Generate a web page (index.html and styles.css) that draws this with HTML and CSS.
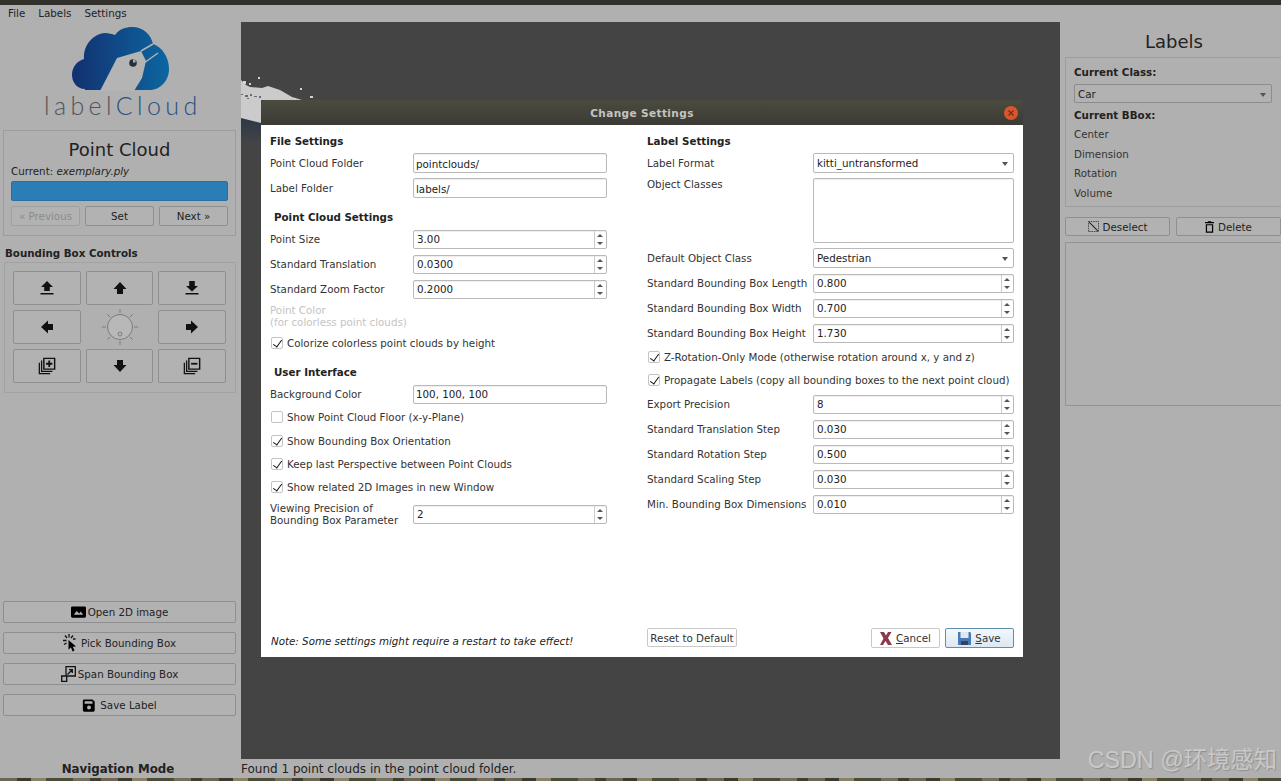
FILE: index.html
```html
<!DOCTYPE HTML>
<html>
<head>
 <title>labelCloud</title>
 <meta name="viewport" content="width=device-width, initial-scale=1">
 <link rel="stylesheet" href="styles.css">
</head>

<body>
<svg class="icon-defs" width="0" height="0">
  <symbol id="i-up" viewBox="0 0 16 16"><path d="M8 2 14.500 9H11v5H5V9H1.500z"/></symbol>
  <symbol id="i-up-bar" viewBox="0 0 16 16"><path d="M8 1 14 7H10.800v4H5.200V7H2zM1.500 13h13v1.600h-13z"/></symbol>
  <symbol id="i-down-bar" viewBox="0 0 16 16"><path d="M5.200 1h5.600v5H14L8 11.500 2 6h3.200zM1.500 13h13v1.600h-13z"/></symbol>
  <symbol id="i-add" viewBox="0 0 20 20"><path d="M6.500 1.500h12v12h-12z" fill="none" stroke="#111" stroke-width="1.600"/><path d="M11.500 4h2v2.500H16v2h-2.500V11h-2V8.500H9v-2h2.500z"/><path d="M4 4v12h12M1.500 6.500v12h12" fill="none" stroke="#111" stroke-width="1.400"/></symbol>
  <symbol id="i-remove" viewBox="0 0 20 20"><path d="M6.500 1.500h12v12h-12z" fill="none" stroke="#111" stroke-width="1.600"/><path d="M9 6.500h7v2H9z"/><path d="M4 4v12h12M1.500 6.500v12h12" fill="none" stroke="#111" stroke-width="1.400"/></symbol>
  <symbol id="i-floppy" viewBox="0 0 16 16"><path d="M2.500 1h9.500l2.500 2.500v10a1.500 1.500 0 0 1-1.500 1.500H2.500A1.500 1.500 0 0 1 1 13.500v-11A1.500 1.500 0 0 1 2.500 1zM3 3v3h9V3zm5 5a2 2 0 1 0 0 4.500A2 2 0 0 0 8 8z" fill-rule="evenodd"/></symbol>
</svg>

<div class="top-strip"></div>
<div class="menubar">
  <span>File</span>
  <span>Labels</span>
  <span>Settings</span>
</div>

<div class="main">
  <div class="left-panel">
    <div class="logo">
      <svg class="logo-mark" width="120" height="75" viewBox="0 0 120 75">
        <defs>
          <linearGradient id="cloud-grad" x1="0" x2="1" y1="0" y2="0">
            <stop offset="0" stop-color="#12306f"/>
            <stop offset="1" stop-color="#0d66a1"/>
          </linearGradient>
        </defs>
        <path fill="url(#cloud-grad)" d="M25 69C17 69 12 62 12 55 12 47 17 41 24 39 23 25 33 14 45 13 49 13 52 14 55 15 59 9 66 7 72 7 84 7 91 15 93 24 102 27 109 37 109 49 109 61 100 70 90 70H25z"/>
        <path fill="#b4b4b4" d="M40 71 57 38 81 31 86 41 82 58 74 71z"/>
        <path fill="none" stroke="#b4b4b4" stroke-width="1.500" d="M81 31 93 24M84 43 98 33"/>
        <circle cx="73" cy="43" r="3.800" fill="#2a2f36"/>
        <path fill="#b4b4b4" d="M73 39.500h2.500v3h-2.500z"/>
      </svg>
      <div class="logo-text">label<span class="logo-cloud">Cloud</span></div>
    </div>

    <div class="group">
      <div class="group-title">Point Cloud</div>
      <div class="current">Current: <i>exemplary.ply</i></div>
      <div class="progress"></div>
      <div class="pc-buttons">
        <div class="btn btn-disabled">« Previous</div>
        <div class="btn">Set</div>
        <div class="btn">Next »</div>
      </div>
    </div>

    <div class="controls-title">Bounding Box Controls</div>
    <div class="controls">
      <div class="btn"><svg class="ctl-icon"><use href="#i-up-bar"/></svg></div>
      <div class="btn"><svg class="ctl-icon"><use href="#i-up"/></svg></div>
      <div class="btn"><svg class="ctl-icon"><use href="#i-down-bar"/></svg></div>
      <div class="btn"><svg class="ctl-icon turn-left"><use href="#i-up"/></svg></div>
      <div class="dial">
        <svg width="36" height="36" viewBox="0 0 36 36">
          <path fill="none" stroke="#7c7c7c" d="M18 0v4M18 32v4M0 18h4M32 18h4M5.300 5.300l2.800 2.800M27.900 27.900l2.800 2.800M5.300 30.700l2.800-2.800M27.900 8.100l2.800-2.800"/>
          <circle cx="18" cy="18" r="12.500" fill="#b8b8b8" stroke="#7c7c7c"/>
          <circle cx="18" cy="25" r="2" fill="none" stroke="#7c7c7c"/>
        </svg>
      </div>
      <div class="btn"><svg class="ctl-icon turn-right"><use href="#i-up"/></svg></div>
      <div class="btn"><svg class="ctl-icon-lg"><use href="#i-add"/></svg></div>
      <div class="btn"><svg class="ctl-icon flip-y"><use href="#i-up"/></svg></div>
      <div class="btn"><svg class="ctl-icon-lg"><use href="#i-remove"/></svg></div>
    </div>

    <div class="actions">
      <div class="btn btn-wide btn-tight">
        <svg width="15" height="12" viewBox="0 0 16 12"><path fill-rule="evenodd" d="M1.500 0h13A1.500 1.500 0 0 1 16 1.500v9a1.500 1.500 0 0 1-1.500 1.500h-13A1.500 1.500 0 0 1 0 10.500v-9A1.500 1.500 0 0 1 1.500 0zM3 9h10L10.500 5.500 8.800 7.500 6 5z"/></svg>
        Open 2D image
      </div>
      <div class="btn btn-wide">
        <svg width="14" height="18" viewBox="0 0 14 18"><path d="M5.500 6 13 12.500 9.800 12.700 11.500 16.500 9.600 17.400 8 13.500 5.500 15.500z"/><path fill="none" stroke="#111" stroke-width="1.300" d="M6 0v3.500M2 1.500 4 4M10 1.500 8 4M0 6.500h3.500M1 10.500 3.500 9M12.500 5h-2.500"/></svg>
        Pick Bounding Box
      </div>
      <div class="btn btn-wide btn-tight">
        <svg width="15" height="16" viewBox="0 0 15 16"><path fill="none" stroke="#111" stroke-width="1.300" d="M5 5V.7h9.300V10H10M.7 10h5v5.300h-5zM6.500 8.500 11 4M8 3.700h3.300V7M5 5v5M5 10h5"/></svg>
        Span Bounding Box
      </div>
      <div class="btn btn-wide">
        <svg class="act-floppy"><use href="#i-floppy"/></svg>
        Save Label
      </div>
    </div>
  </div>

  <div class="gl-view">
    <svg class="cloud-points" width="80" height="100" viewBox="0 0 80 100">
      <defs>
        <linearGradient id="slate" x1="0" x2="0" y1="0" y2="1">
          <stop offset="0" stop-color="#2d3848"/>
          <stop offset="1" stop-color="#444"/>
        </linearGradient>
      </defs>
      <path fill="url(#slate)" d="M0 74 20 79V100H0z"/>
      <path fill="#cbcbcb" d="M0 36 5 41 9 43 21 44 27 42 39 46 51 53 61 56H20V79L0 74z"/>
      <path fill="#6a6a6a" d="M0 50h2v1H0zM4 51h3v2H4zM9 50h2v2H9zM13 52h3v1h-3zM18 52h2v2h-2zM6 54h2v1H6z"/>
      <path fill="#d2d2d2" d="M2 37h3v3H2zM8 39h2v2H8zM17 33h2v2h-2zM59 44h2v2h-2zM69 52h3v2h-3zM52 54h3v1h-3z"/>
    </svg>
  </div>

  <div class="right-panel">
    <div class="labels-title">Labels</div>
    <div class="label-group">
      <div class="bold">Current Class:</div>
      <div class="combo combo-dim">Car<span class="caret"></span></div>
      <div class="bold bbox-title">Current BBox:</div>
      <div class="bbox-row">Center</div>
      <div class="bbox-row">Dimension</div>
      <div class="bbox-row">Rotation</div>
      <div class="bbox-row">Volume</div>
    </div>
    <div class="label-buttons">
      <div class="btn">
        <svg width="11" height="11" viewBox="0 0 14 14"><path fill="none" stroke="#222" stroke-dasharray="2 1" d="M.5.500h13v13H.5z"/><path fill="none" stroke="#222" stroke-width="1.300" d="M1.500 1.500l11 11"/></svg>
        Deselect
      </div>
      <div class="btn">
        <svg width="9" height="12" viewBox="0 0 11 14"><path fill-rule="evenodd" d="M0 1h3.500V0h4v1H11v1.500H0zM1 3.500h9V14H1zM2.500 5v7.500h6V5z"/></svg>
        Delete
      </div>
    </div>
    <div class="label-list"></div>
  </div>
</div>

<div class="status">
  <div class="mode">Navigation Mode</div>
  <div class="status-text">Found 1 point clouds in the point cloud folder.</div>
</div>
<div class="photo-strip"></div>

<div class="dialog">
  <div class="dialog-title">
    <span>Change Settings</span>
    <span class="close-btn">
      <svg width="8" height="8" viewBox="0 0 8 8"><path fill="none" stroke="#7a2a12" stroke-width="1.200" d="M1.500 1.500l5 5M6.500 1.500l-5 5"/></svg>
    </span>
  </div>
  <div class="dialog-body">

    <div class="col col-left">
      <div class="heading">File Settings</div>
      <div class="row row-first"><label>Point Cloud Folder</label><div class="field">pointclouds/</div></div>
      <div class="row"><label>Label Folder</label><div class="field">labels/</div></div>

      <div class="heading heading-sub pc-heading">Point Cloud Settings</div>
      <div class="row row-spin row-after-head"><label>Point Size</label><div class="spin">3.00<span class="stepper"></span></div></div>
      <div class="row row-spin"><label>Standard Translation</label><div class="spin">0.0300<span class="stepper"></span></div></div>
      <div class="row row-spin"><label>Standard Zoom Factor</label><div class="spin">0.2000<span class="stepper"></span></div></div>
      <div class="two-line two-line-off">Point Color<br>(for colorless point clouds)</div>
      <div class="check"><span class="box on"></span>Colorize colorless point clouds by height</div>

      <div class="heading heading-sub ui-heading">User Interface</div>
      <div class="row row-spin row-after-head"><label>Background Color</label><div class="field field-thin">100, 100, 100</div></div>
      <div class="check check-tight"><span class="box"></span>Show Point Cloud Floor (x-y-Plane)</div>
      <div class="check check-8"><span class="box on"></span>Show Bounding Box Orientation</div>
      <div class="check"><span class="box on"></span>Keep last Perspective between Point Clouds</div>
      <div class="check"><span class="box on"></span>Show related 2D Images in new Window</div>
      <div class="row row-tall"><label>Viewing Precision of<br>Bounding Box Parameter</label><div class="spin">2<span class="stepper"></span></div></div>

      <div class="note"><i>Note: Some settings might require a restart to take effect!</i></div>
    </div>

    <div class="col col-right">
      <div class="heading">Label Settings</div>
      <div class="row row-first"><label>Label Format</label><div class="combo">kitti_untransformed<span class="caret"></span></div></div>
      <div class="row row-classes"><label>Object Classes</label><div class="textbox"></div></div>
      <div class="row"><label>Default Object Class</label><div class="combo">Pedestrian<span class="caret"></span></div></div>
      <div class="row row-spin"><label>Standard Bounding Box Length</label><div class="spin">0.800<span class="stepper"></span></div></div>
      <div class="row row-spin"><label>Standard Bounding Box Width</label><div class="spin">0.700<span class="stepper"></span></div></div>
      <div class="row row-spin"><label>Standard Bounding Box Height</label><div class="spin">1.730<span class="stepper"></span></div></div>
      <div class="check check-6"><span class="box on"></span>Z-Rotation-Only Mode (otherwise rotation around x, y and z)</div>
      <div class="check"><span class="box on"></span>Propagate Labels (copy all bounding boxes to the next point cloud)</div>
      <div class="row row-spin row-7"><label>Export Precision</label><div class="spin">8<span class="stepper"></span></div></div>
      <div class="row row-spin"><label>Standard Translation Step</label><div class="spin">0.030<span class="stepper"></span></div></div>
      <div class="row row-spin"><label>Standard Rotation Step</label><div class="spin">0.500<span class="stepper"></span></div></div>
      <div class="row row-spin"><label>Standard Scaling Step</label><div class="spin">0.030<span class="stepper"></span></div></div>
      <div class="row row-spin"><label>Min. Bounding Box Dimensions</label><div class="spin">0.010<span class="stepper"></span></div></div>

      <div class="dialog-footer">
        <div class="dlg-btn dlg-reset">Reset to Default</div>
        <div class="footer-right">
          <div class="dlg-btn dlg-cancel">
            <svg width="12" height="13" viewBox="0 0 12 13"><path fill="#8a3a48" d="M0 0h4l2 3.500L8 0h3.500L8 6l4 7H8L5.500 9 3 13H0l3.500-6.500z"/></svg>
            <span><u>C</u>ancel</span>
          </div>
          <div class="dlg-btn dlg-save">
            <svg width="13" height="13" viewBox="0 0 13 13"><path fill="#4a78b5" d="M0 0h12l1 1v12H0z"/><path fill="#dfe8f2" d="M2.500 0h8v6h-8z"/><path fill="#33455e" d="M3 9h7v4H3z"/></svg>
            <span><u>S</u>ave</span>
          </div>
        </div>
      </div>
    </div>

  </div>
</div>

<div class="watermark">CSDN @环境感知</div>

</body>
</html>
```

FILE: styles.css
```css
* {
 box-sizing: border-box;
}

html, body {
 margin: 0;
 height: 100%;
}

body {
 position: relative;
 width: 1281px;
 height: 781px;
 overflow: hidden;
 background-color: #b0b0b0;
 color: #222;
 font-family: "DejaVu Sans", sans-serif;
 font-size: 10.300px;
 line-height: 16px;
}

.icon-defs {
 position: absolute;
}

.top-strip {
 height: 5px;
 background-color: #31302b;
}

.menubar {
 display: flex;
 gap: 13px;
 height: 17px;
 padding-left: 8px;
}

.main {
 display: flex;
 height: 737px;
}

/* left column */
.left-panel {
 display: flex;
 flex-direction: column;
 width: 241px;
 padding: 0 5px 43px 3px;
}

.logo {
 position: relative;
 height: 108px;
 text-align: center;
}

.logo-mark {
 display: block;
 position: absolute;
 left: 57px;
 top: -2px;
}

.logo-text {
 position: absolute;
 left: 41px;
 top: 69px;
 font-family: "Lato", sans-serif;
 font-weight: 300;
 font-size: 25px;
 line-height: 28px;
 letter-spacing: 4.400px;
 color: #50545a;
}

.logo-cloud {
 color: #2b4f86;
}

.group {
 height: 106px;
 padding: 7px 7px 0;
 border: 1px solid #9c9c9c;
}

.group-title {
 height: 24px;
 font-size: 18px;
 line-height: 24px;
 text-align: center;
}

.current {
 margin-top: 1px;
 line-height: 16px;
}

.progress {
 height: 20px;
 margin-top: 2px;
 border-radius: 2px;
 background-color: #2a7db5;
 border: 1px solid #2a6f9f;
}

.pc-buttons {
 display: grid;
 grid-template-columns: 69px 69px 69px;
 gap: 5px;
 margin-top: 5px;
 height: 20px;
}

.btn {
 display: flex;
 align-items: center;
 justify-content: center;
 gap: 4px;
 border: 1px solid #8f8f8f;
 border-radius: 2px;
 background-color: #b2b2b2;
 color: #222;
}

.btn-tight {
 gap: 2px;
}

.btn-disabled {
 color: #8c8c8c;
 border-color: #a0a0a0;
}

.controls-title {
 margin-top: 9px;
 height: 17px;
 padding-left: 2px;
 font-weight: bold;
}

.controls {
 display: grid;
 grid-template-columns: 68px 67px 68px;
 grid-auto-rows: 34px;
 gap: 5px;
 height: 131px;
 margin-left: 1px;
 padding: 8px 8px;
 border: 1px solid #a2a2a2;
}

.ctl-icon {
 width: 16px;
 height: 16px;
 fill: #111;
}

.ctl-icon-lg {
 width: 18px;
 height: 18px;
 fill: #111;
}

.flip-y {
 transform: scaleY(-1);
}

.turn-left {
 transform: rotate(-90deg);
}

.turn-right {
 transform: rotate(90deg);
}

.dial {
 display: flex;
 align-items: center;
 justify-content: center;
}

.actions {
 display: flex;
 flex-direction: column;
 gap: 9px;
 margin-top: auto;
}

.btn-wide {
 height: 22px;
}

.act-floppy {
 width: 14px;
 height: 15px;
}

/* centre */
.gl-view {
 position: relative;
 width: 819px;
 background-color: #444;
}

.cloud-points {
 position: absolute;
 left: 0;
 top: 22px;
}

/* right column */
.right-panel {
 width: 221px;
 padding-left: 5px;
 flex: none;
}

.labels-title {
 width: 218px;
 height: 35px;
 padding-top: 9px;
 font-size: 18px;
 line-height: 22px;
 text-align: center;
}

.label-group {
 width: 224px;
 height: 150px;
 padding: 6px 8px 0;
 border: 1px solid #9c9c9c;
}

.bold {
 font-weight: bold;
}

.label-group .combo {
 width: 198px;
 height: 19px;
 margin-top: 4px;
 background-color: #b2b2b2;
 border-color: #8c8c8c;
}

.bbox-title {
 margin-top: 4px;
 margin-bottom: 1px;
}

.bbox-row {
 height: 19.600px;
 line-height: 20px;
 color: #333;
}

.label-buttons {
 display: grid;
 grid-template-columns: 105px 105px;
 gap: 6px;
 height: 19px;
 margin-top: 10px;
}

.label-list {
 width: 224px;
 height: 164px;
 margin-top: 6px;
 border: 1px solid #939393;
}

/* status row */
.status {
 display: flex;
 height: 19px;
 align-items: center;
 font-size: 12px;
}

.mode {
 width: 241px;
 padding-right: 5px;
 font-weight: bold;
 text-align: center;
 font-size: 11.800px;
}

.photo-strip {
 height: 3px;
 background: repeating-linear-gradient(90deg, #6e6552 0 17px, #3c3a2c 17px 31px, #8a8168 31px 46px, #4c4b38 46px 73px, #75705c 73px 90px, #3f3e30 90px 101px);
}

/* settings dialog */
.dialog {
 position: absolute;
 left: 261px;
 top: 100px;
 width: 762px;
 height: 557px;
 display: flex;
 flex-direction: column;
}

.dialog-title {
 display: flex;
 align-items: center;
 justify-content: center;
 position: relative;
 height: 25px;
 flex: none;
 border-radius: 5px 5px 0 0;
 background: linear-gradient(#4b4b3f, #3b3a35);
 color: #c4c4c0;
 font-weight: bold;
 font-size: 10.500px;
 letter-spacing: .4px;
}

.close-btn {
 position: absolute;
 right: 5px;
 top: 6px;
 display: flex;
 align-items: center;
 justify-content: center;
 width: 14px;
 height: 14px;
 border-radius: 50%;
 background-color: #d9552c;
}

.dialog-body {
 display: flex;
 flex: 1;
 background-color: #fff;
 padding: 8px 9px 9px;
}

.col {
 display: flex;
 flex-direction: column;
}

.col-left {
 width: 377px;
 --label-w: 143px;
 --field-w: 194px;
}

.col-right {
 width: 367px;
 --label-w: 166px;
 --field-w: 201px;
}

.heading {
 height: 16px;
 font-weight: bold;
 line-height: 16px;
}

.heading-sub {
 padding-left: 4px;
}

.pc-heading {
 margin-top: 11px;
}

.ui-heading {
 margin-top: 13px;
}

.row {
 display: flex;
 align-items: center;
 height: 20px;
 margin-top: 5px;
}

.row label {
 width: var(--label-w);
 flex: none;
 line-height: 12px;
 color: #333;
}

.row-first {
 margin-top: 4px;
}

.row-spin {
 height: 19px;
 margin-top: 6px;
}

.row-spin label {
 margin-bottom: 2px;
}

.row-after-head {
 margin-top: 5px;
}

.row-7 {
 margin-top: 7px;
}

.row-classes {
 align-items: flex-start;
 height: 65px;
}

.row-tall {
 height: 24px;
 margin-top: 7px;
}

.field, .spin, .combo, .textbox {
 position: relative;
 width: var(--field-w);
 height: 100%;
 padding-left: 2px;
 border: 1px solid #b9b9b9;
 border-radius: 2px;
 background-color: #fff;
 box-shadow: inset 0 1px 1px #eee;
 color: #222;
 display: flex;
 align-items: center;
}

.field {
 padding-top: 1px;
}

.field-thin {
 padding-top: 0;
 padding-bottom: 1px;
}

.row-tall .spin {
 height: 19px;
}

.spin, .combo {
 padding-left: 3px;
}

.spin {
 padding-bottom: 1px;
}

.combo {
 box-shadow: none;
}

.caret {
 position: absolute;
 right: 5px;
 top: 50%;
 margin-top: -1px;
 border-left: 3.500px solid transparent;
 border-right: 3.500px solid transparent;
 border-top: 4px solid #555;
}

.stepper {
 position: absolute;
 right: 0;
 top: 0;
 bottom: 0;
 width: 12px;
 border-left: 1px solid #ccc;
}

.stepper::before, .stepper::after {
 content: "";
 position: absolute;
 left: 2px;
 border-left: 3px solid transparent;
 border-right: 3px solid transparent;
}

.stepper::before {
 top: 3px;
 border-bottom: 3.500px solid #555;
}

.stepper::after {
 bottom: 3px;
 border-top: 3.500px solid #555;
}

.two-line {
 height: 24px;
 margin-top: 5px;
 line-height: 12px;
}

.two-line-off {
 color: #c4c4c4;
}

.check {
 display: flex;
 align-items: center;
 gap: 4px;
 height: 16px;
 margin-top: 7px;
 color: #333;
 padding-left: 1px;
 white-space: nowrap;
}

.check-tight {
 margin-top: 5px;
}

.check-8 {
 margin-top: 8px;
}

.check-6 {
 margin-top: 6px;
}

.box {
 position: relative;
 width: 12px;
 height: 12px;
 flex: none;
 border: 1px solid #c4c4c4;
 border-radius: 2px;
 background-color: #fff;
}

.box.on::after {
 content: "";
 position: absolute;
 left: 3px;
 top: 0;
 width: 4px;
 height: 8px;
 border-right: 1.800px solid #111;
 border-bottom: 1.800px solid #111;
 transform: rotate(35deg);
}

.note {
 margin-top: auto;
 height: 16px;
 margin-bottom: -1px;
 padding-left: 1px;
 color: #222;
}

.dialog-footer {
 display: flex;
 justify-content: space-between;
 margin-top: auto;
 height: 20px;
}

.footer-right {
 display: flex;
 gap: 5px;
}

.dlg-btn {
 display: flex;
 align-items: center;
 justify-content: center;
 gap: 4px;
 height: 20px;
 width: 91px;
 border: 1px solid #c8c8c8;
 border-radius: 2px;
 background-color: #fff;
 color: #333;
}

.dlg-reset {
 width: 90px;
 height: 19px;
}

.dlg-cancel {
 width: 69px;
}

.dlg-save {
 width: 69px;
 border-color: #5d90ad;
 background: linear-gradient(#f4f8fb, #dce8f2);
}

.watermark {
 position: absolute;
 right: 4px;
 top: 745px;
 font-family: "Liberation Sans", "Noto Sans CJK SC", sans-serif;
 font-size: 23.300px;
 line-height: 30px;
 color: #c9c9c9;
 text-shadow: 1px 1px 1px #8f8f8f;
}
```
